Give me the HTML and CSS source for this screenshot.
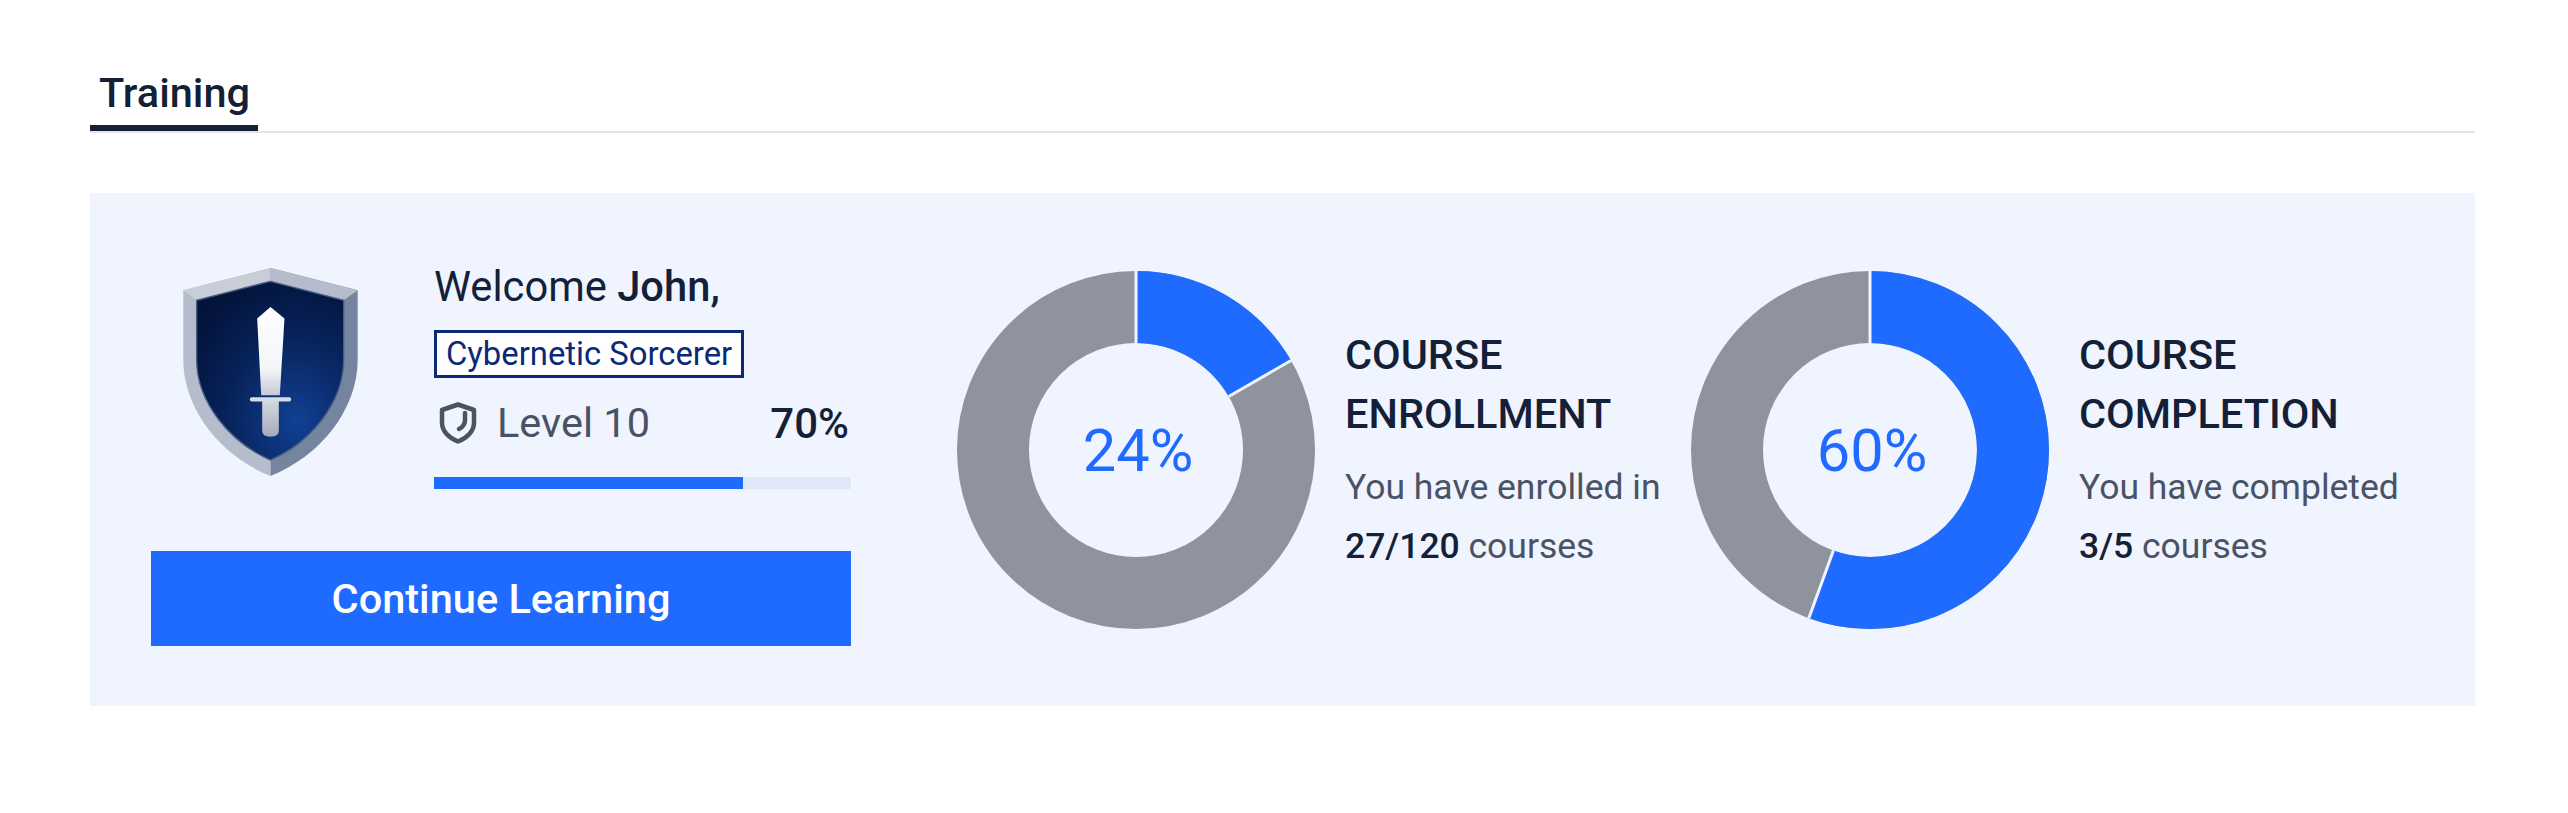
FILE: index.html
```html
<!DOCTYPE html>
<html>
<head>
  <title>Training</title>
  <link rel="stylesheet" href="styles.css">
</head>
<body>
  <div class="tabs">
    <div class="tab">Training</div>
  </div>

  <div class="panel">
    <div class="profile">
      <div class="profile-top">
        <svg class="badge" viewBox="68 55 524 625">
          <defs>
            <radialGradient id="badgeInner" cx="0.68" cy="0.78" r="0.85">
              <stop offset="0" stop-color="#114093"/>
              <stop offset="0.55" stop-color="#07235b"/>
              <stop offset="1" stop-color="#03133a"/>
            </radialGradient>
            <linearGradient id="badgeGrip" x1="0" y1="0" x2="0" y2="1">
              <stop offset="0" stop-color="#d5d8e0"/>
              <stop offset="1" stop-color="#a4abba"/>
            </linearGradient>
            <linearGradient id="badgeBlade" x1="0" y1="0" x2="0" y2="1">
              <stop offset="0" stop-color="#ffffff"/>
              <stop offset="0.7" stop-color="#f4f5f8"/>
              <stop offset="1" stop-color="#c6cad4"/>
            </linearGradient>
          </defs>
          <path fill="#b5bccb" d="M330 55 L330 680 C180 620 68 480 68 330 V122 Z"/>
          <path fill="#76859f" d="M330 55 L592 122 V330 C592 480 480 620 330 680 Z"/>
          <path fill="#c9cdd8" d="M330 55 V95 L108 152 L68 122 Z"/>
          <path fill="#b6bccb" d="M330 55 L592 122 L550 152 L330 95 Z"/>
          <path fill="url(#badgeInner)" stroke="#4a5f8a" stroke-width="4" d="M330 95 L550 152 V330 C550 460 450 580 330 632 C210 580 108 460 108 330 V152 Z"/>
          <path fill="url(#badgeGrip)" d="M305 452 H355 V545 Q355 562 330 562 Q305 562 305 545 Z"/>
          <rect fill="#d8dbe3" x="268" y="443" width="124" height="13" rx="6"/>
          <path fill="url(#badgeBlade)" d="M330 172 L372 207 L358 437 H302 L290 207 Z"/>
        </svg>
        <div class="profile-info">
          <div class="welcome">Welcome <b>John,</b></div>
          <div class="rank"><span class="rank-tag">Cybernetic Sorcerer</span></div>
          <div class="level-row">
            <div class="level">
              <svg class="level-icon" viewBox="0 0 38 42">
                <path d="M19 2.5 L35 8 V21 C35 29 28 36 19 39.5 C10 36 3 29 3 21 V8 Z"/>
                <path d="M26 11 V18 C26 22 24 25 20 27"/>
              </svg>
              <span>Level 10</span>
            </div>
            <b class="level-pct">70%</b>
          </div>
          <div class="bar"><div class="bar-fill" style="width: 74.2%"></div></div>
        </div>
      </div>
      <button class="continue">Continue Learning</button>
    </div>

    <div class="stat stat-enroll">
      <div class="donut">
        <svg viewBox="0 0 358 358">
          <circle class="ring-bg" cx="179" cy="179" r="143"/>
          <circle class="ring-val" cx="179" cy="179" r="143" pathLength="360" stroke-dasharray="60 300"/>
          <line class="ring-cut" x1="179" y1="0" x2="179" y2="72"/>
          <line class="ring-cut" x1="334" y1="89.5" x2="271.7" y2="125.5"/>
        </svg>
        <div class="donut-label">24%</div>
      </div>
      <div class="stat-text">
        <h3>COURSE<br>ENROLLMENT</h3>
        <p>You have enrolled in<br><b>27/120</b> courses</p>
      </div>
    </div>

    <div class="stat">
      <div class="donut">
        <svg viewBox="0 0 358 358">
          <circle class="ring-bg" cx="179" cy="179" r="143"/>
          <circle class="ring-val" cx="179" cy="179" r="143" pathLength="360" stroke-dasharray="200 160"/>
          <line class="ring-cut" x1="179" y1="0" x2="179" y2="72"/>
          <line class="ring-cut" x1="117.8" y1="347.2" x2="142.4" y2="279.5"/>
        </svg>
        <div class="donut-label">60%</div>
      </div>
      <div class="stat-text">
        <h3>COURSE<br>COMPLETION</h3>
        <p>You have completed<br><b>3/5</b> courses</p>
      </div>
    </div>
  </div>
</body>
</html>
```

FILE: styles.css
```css
body {
  margin: 0;
  padding: 63px 93px 0 90px;
  font-family: Roboto, sans-serif;
  background-color: #fff;
  color: #141f38;
}
b {
  font-weight: 500;
}

.tabs {
  border-bottom: 2px solid #e4e6ea;
}
.tab {
  display: inline-block;
  padding: 0 8px 2px 9px;
  border-bottom: 6px solid #141f38;
  font-size: 41.5px;
  font-weight: 500;
  line-height: 60px;
  vertical-align: bottom;
}

.panel {
  display: flex;
  align-items: center;
  height: 513px;
  margin-top: 60px;
  background-color: #eff4fe;
}

.profile {
  align-self: stretch;
  box-sizing: border-box;
  width: 700px;
  margin-left: 61px;
  padding-top: 75px;
}
.profile-top {
  display: flex;
  height: 283px;
  margin-left: 32px;
}
.badge {
  width: 175px;
  height: 208px;
  flex: none;
}
.profile-info {
  flex: 1;
  margin-left: 76px;
  margin-top: -9px;
}
.welcome {
  font-size: 41.7px;
  line-height: 56px;
}
.rank {
  margin-top: 15px;
}
.rank-tag {
  display: inline-block;
  padding: 0 9px;
  border: 3px solid #0a2a78;
  background-color: #fff;
  font-size: 32.8px;
  line-height: 42px;
  color: #0a2a78;
}
.level-row {
  display: flex;
  justify-content: space-between;
  align-items: center;
  margin-top: 17px;
  padding: 0 2px 0 5px;
}
.level {
  display: flex;
  align-items: center;
  gap: 20px;
  font-size: 41.5px;
  line-height: 56px;
  color: #4a5266;
}
.level-icon {
  width: 38px;
  height: 42px;
  fill: none;
  stroke: #4b5262;
  stroke-width: 4.5;
  stroke-linecap: round;
  stroke-linejoin: round;
}
.level-pct {
  font-size: 42px;
}
.bar {
  height: 12px;
  margin-top: 26px;
  background-color: #e0e7fa;
}
.bar-fill {
  height: 100%;
  background-color: #1f6bff;
}

.continue {
  display: block;
  width: 100%;
  height: 95px;
  border: none;
  background-color: #1f6bff;
  color: #fff;
  font-family: inherit;
  font-size: 41.5px;
  font-weight: 500;
}

.stat {
  display: flex;
  align-items: center;
  gap: 30px;
}
.stat-enroll {
  width: 734px;
  margin-left: 106px;
}
.donut {
  position: relative;
  width: 358px;
  height: 358px;
  flex: none;
}
.donut svg {
  display: block;
}
.ring-bg,
.ring-val {
  fill: none;
  stroke-width: 72;
}
.ring-bg {
  stroke: #8e939e;
}
.ring-val {
  stroke: #1f6bff;
  transform: rotate(-90deg);
  transform-origin: center;
}
.ring-cut {
  stroke: #eff4fe;
  stroke-width: 3;
}
.donut-label {
  position: absolute;
  inset: 2px 0 0 4px;
  display: flex;
  align-items: center;
  justify-content: center;
  font-size: 59.5px;
  font-weight: 450;
  color: #1f6bff;
}
.stat-text {
  padding-top: 1px;
}
.stat-text h3 {
  margin: 0;
  font-size: 41.5px;
  font-weight: 500;
  line-height: 59px;
}
.stat-text p {
  margin: 15px 0 0;
  font-size: 35.5px;
  line-height: 59px;
  color: #4a5266;
}
.stat-text p b {
  color: #141f38;
}
```
